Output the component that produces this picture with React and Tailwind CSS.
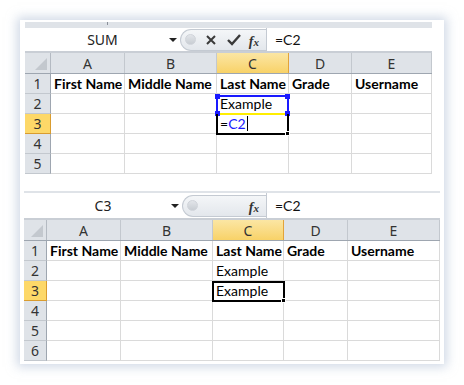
import React from 'react';

const hdrFont = { fontFamily: '"Noto Sans", "DejaVu Sans", sans-serif' };
const cellFont = { fontFamily: 'Lato, "Open Sans", sans-serif' };

const FxIcon = () => (
  <span className="italic font-bold text-[14px] text-[#333] leading-none" style={{ fontFamily: '"Liberation Serif", serif' }}>
    f<span className="text-[11px]">x</span>
  </span>
);

const Corner = ({ w }) => (
  <div className={`relative h-full shrink-0 bg-[#dfe3e8] border-r border-[#b4bac2] ${w}`}>
    <div className="absolute right-[3px] bottom-[3px] w-0 h-0 border-l-[12px] border-l-transparent border-b-[12px] border-b-[#c3c8ce]" />
  </div>
);

const Toolbar = ({ name, showEdit, nameW, formula, strip, barH }) => (
  <div>
    <div className={`relative ${strip} bg-[#dfe3e8]`}>
      {showEdit && <div className="absolute left-[82px] top-0 w-px h-[3px] bg-[#8a9099]" />}
    </div>
    <div className={`flex items-stretch ${barH} bg-white`} style={hdrFont}>
      <div className={`${nameW} shrink-0 flex items-center relative`}>
        <span className="flex-1 text-center text-[14px] text-[#222]">{name}</span>
        <span className="absolute right-[3px] top-[45%] w-0 h-0 border-l-[4px] border-r-[4px] border-t-[4px] border-l-transparent border-r-transparent border-t-[#222]" />
      </div>
      <div className="flex items-center flex-1">
        <div className="h-[22px] flex items-center bg-gradient-to-b from-[#f4f6f8] to-[#e3e7ec] border border-r-0 border-[#c4cad2] rounded-l-full pl-[4px] pr-[4px]" style={{ width: showEdit ? 86 : 84 }}>
          <span className="w-[11px] h-[11px] rounded-full bg-gradient-to-b from-[#e2e5e9] to-[#c8cdd3] border border-[#d0d4da]" />
          <span className="flex-1" />
          {showEdit && (
            <>
              <svg width="12" height="12" viewBox="0 0 12 12" className="mr-[10px]">
                <path d="M2 2 L10 10 M10 2 L2 10" stroke="#3a3a3a" strokeWidth="2" />
              </svg>
              <svg width="14" height="12" viewBox="0 0 14 12" className="mr-[8px]">
                <path d="M1 6 L5 10 L13 1" stroke="#3a3a3a" strokeWidth="2.4" fill="none" />
              </svg>
            </>
          )}
          <span className="mr-[3px]"><FxIcon /></span>
        </div>
        <div className="w-px h-full bg-[#c4cad2]" />
        <span className="pl-[8px] text-[14px] text-[#111]" style={cellFont}>{formula}</span>
      </div>
    </div>
    <div className="h-[2px] bg-[#c9ced5]" />
  </div>
);

const Header = ({ cols, rowW, sel }) => (
  <div className="flex h-[21px] border-b border-[#9ea6b0]" style={hdrFont}>
    <Corner w={rowW} />
    {cols.map(([l, w]) => (
      <div
        key={l}
        className={`${w} shrink-0 flex items-center justify-center text-[14px] text-[#333] border-r ${l === sel ? 'bg-gradient-to-b from-[#fbe6a3] to-[#f8d267] border-[#e2a33a]' : 'bg-[#dfe3e8] border-[#c3c8ce]'}`}
      >
        {l}
      </div>
    ))}
  </div>
);

const Row = ({ n, cols, rowW, selRow, children }) => (
  <div className="relative flex h-[20px]">
    <div
      className={`${rowW} shrink-0 flex items-center justify-center text-[14px] text-[#333] border-b border-r ${n === selRow ? 'bg-[#fdd868] border-[#d99c2f]' : 'bg-[#dfe3e8] border-r-[#9ea6b0] border-b-[#c3c8ce]'}`}
      style={hdrFont}
    >
      {n}
    </div>
    {cols.map(([l, w], i) => (
      <div key={l} className={`${w} shrink-0 border-r border-b border-[#dadada] flex items-end pl-[3px] pb-[1px] text-[14px] text-black leading-none whitespace-nowrap`} style={cellFont}>
        {children && children[i]}
      </div>
    ))}
  </div>
);

const Handle = ({ color }) => (
  <span className={`absolute -right-[3px] -bottom-[3px] w-[5px] h-[5px] ${color} border border-white`} />
);

const headings = ['First Name', 'Middle Name', 'Last Name', 'Grade', 'Username'];

const Sheet1 = () => {
  const cols = [['A', 'w-[74px]'], ['B', 'w-[92px]'], ['C', 'w-[72px]'], ['D', 'w-[63px]'], ['E', 'w-[80px]']];
  const rowW = 'w-[26px]';
  return (
    <div className="relative ml-[5px] mt-[2px] w-[407px]">
      <Toolbar name="SUM" showEdit nameW="w-[155px]" formula="=C2" strip="h-[6px]" barH="h-[23px]" />
      <Header cols={cols} rowW={rowW} sel="C" />
      <Row n={1} cols={cols} rowW={rowW}>
        {headings.map((h) => <b key={h} className="font-bold text-[14px] pb-[1px] whitespace-nowrap">{h}</b>)}
      </Row>
      <Row n={2} cols={cols} rowW={rowW}>{[null, null, <span key="e" className="pb-[1px]">Example</span>]}</Row>
      <Row n={3} cols={cols} rowW={rowW} selRow={3}>
        {[null, null, <span key="f" className="pb-[1px] flex items-end">=<span className="text-[#1a1aff]">C2</span><span className="inline-block w-px h-[15px] bg-black ml-[1px]" /></span>]}
      </Row>
      <Row n={4} cols={cols} rowW={rowW} />
      <Row n={5} cols={cols} rowW={rowW} />
      {/* reference box round C2 */}
      <div className="absolute left-[191px] top-[73px] w-[73px] h-[20px] border-2 border-[#1a1aff] border-b-[#ffee00]">
        <span className="absolute -left-[3px] -top-[3px] w-[5px] h-[5px] bg-[#1a1aff]" />
        <span className="absolute -right-[3px] -top-[3px] w-[5px] h-[5px] bg-[#1a1aff]" />
        <span className="absolute -left-[3px] -bottom-[3px] w-[5px] h-[5px] bg-[#1a1aff]" />
        <span className="absolute -right-[3px] -bottom-[3px] w-[5px] h-[5px] bg-[#1a1aff]" />
      </div>
      {/* active cell C3 */}
      <div className="absolute left-[191px] top-[92px] w-[73px] h-[21px] border-2 border-t-0 border-black">
        <Handle color="bg-black" />
      </div>
    </div>
  );
};

const Sheet2 = () => {
  const cols = [['A', 'w-[74px]'], ['B', 'w-[92px]'], ['C', 'w-[71px]'], ['D', 'w-[64px]'], ['E', 'w-[92px]']];
  const rowW = 'w-[23px]';
  return (
    <div className="relative ml-[4px] mt-[17px] w-[416px]">
      <Toolbar name="C3" nameW="w-[158px]" formula="=C2" strip="h-[2px]" barH="h-[25px]" />
      <Header cols={cols} rowW={rowW} sel="C" />
      <Row n={1} cols={cols} rowW={rowW}>
        {headings.map((h) => <b key={h} className="font-bold text-[14px] pb-[1px] whitespace-nowrap">{h}</b>)}
      </Row>
      <Row n={2} cols={cols} rowW={rowW}>{[null, null, <span key="e" className="pb-[1px]">Example</span>]}</Row>
      <Row n={3} cols={cols} rowW={rowW} selRow={3}>{[null, null, <span key="e" className="pb-[1px]">Example</span>]}</Row>
      <Row n={4} cols={cols} rowW={rowW} />
      <Row n={5} cols={cols} rowW={rowW} />
      <Row n={6} cols={cols} rowW={rowW} />
      <div className="absolute left-[188px] top-[90px] w-[73px] h-[21px] border-2 border-black">
        <Handle color="bg-black" />
      </div>
    </div>
  );
};

export default function App() {
  return (
    <div className="w-[464px] h-[385px] bg-white pt-[20px] pl-[20px]">
      <div className="w-[424px] h-[344px] bg-white shadow-[0_0_10px_3px_rgba(170,185,210,0.55)] overflow-hidden">
        <Sheet1 />
        <Sheet2 />
      </div>
    </div>
  );
}
